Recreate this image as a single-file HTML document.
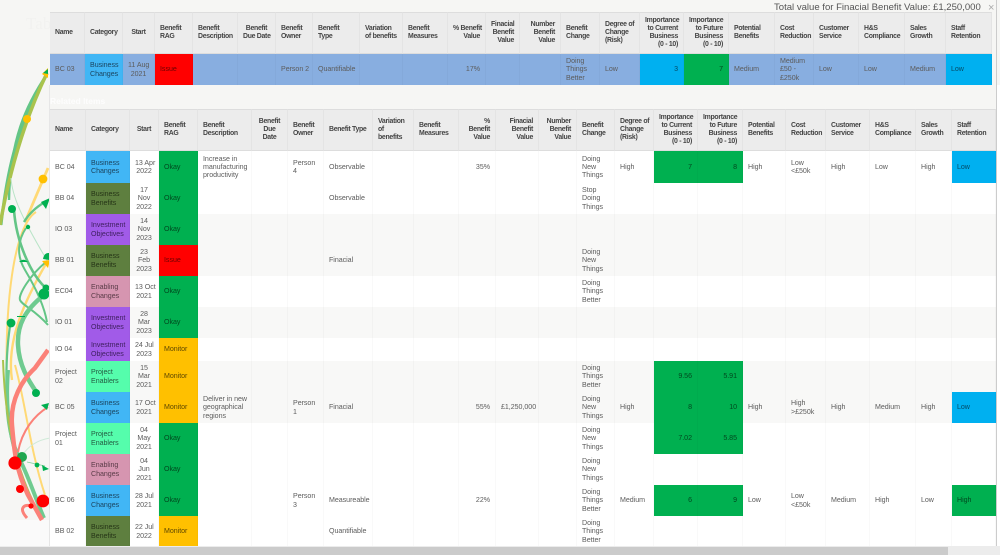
<!DOCTYPE html>
<html><head><meta charset="utf-8"><style>
html,body{margin:0;padding:0;width:1000px;height:555px;overflow:hidden;background:#f6f6f4}
#w{position:absolute;left:0;top:0;width:1000px;height:555px;overflow:hidden;filter:blur(.3px);font-family:"Liberation Sans",sans-serif}
table{position:absolute;left:50px;border-collapse:separate;border-spacing:0;table-layout:fixed;font-size:7.1px;line-height:8.1px;color:#5c5c5c;letter-spacing:-.04px}
td,th{box-sizing:border-box;padding:0 5px;overflow:hidden;white-space:nowrap;vertical-align:middle;text-align:left;border-right:1px solid rgba(0,0,0,.025)}
th{background:#ececec;color:#444;font-weight:bold;font-size:6.9px;letter-spacing:-.28px;border-top:1px solid #ddd;border-bottom:1px solid #ddd;border-right:1px solid #e4e4e4}
.r{text-align:right}.c{text-align:center}
.w td{background:#fff}.g td{background:#f8f8f7}.s td{background:#88aee0}
td.bc{background:#41b6f5!important;color:#1c4560}
td.bb{background:#5e7f3f!important;color:#263517}
td.io{background:#a15be8!important;color:#3f2060}
td.ec{background:#d695b0!important;color:#5a3c48}
td.pe{background:#55fdac!important;color:#245c42}
td.ok{background:#00b050!important;color:#00491f}
td.is{background:#f00!important;color:#6b0000}
td.mo{background:#ffc000!important;color:#5f4800}
td.cy{background:#00b0f0!important;color:#044a66}
.t{position:absolute;white-space:nowrap}
</style></head><body><div id="w">
<div style="position:absolute;left:0;top:520px;width:50px;height:27px;background:#fafafa"></div>
<div class="t" style="left:26px;top:14px;font:17px 'Liberation Serif',serif;color:#f2f2f0">Table of Portfolio Benefits</div>
<div class="t" style="left:50px;top:96px;font:bold 8.5px 'Liberation Sans',sans-serif;color:#fdfdfd">Related Items</div>
<div class="t" style="left:774px;top:1px;font-size:9.55px;line-height:13px;color:#555">Total value for Finacial Benefit Value: £1,250,000</div>
<div class="t" style="left:988px;top:2px;font-size:11px;line-height:12px;color:#aaa">×</div>

<table style="top:12px;width:942px">
<colgroup><col width="35"><col width="38"><col width="32"><col width="38"><col width="45"><col width="38"><col width="37"><col width="47"><col width="43"><col width="45"><col width="38"><col width="34"><col width="41"><col width="39"><col width="40"><col width="44"><col width="45"><col width="46"><col width="39"><col width="45"><col width="46"><col width="41"><col width="46"></colgroup>
<tr style="height:42px"><th>Name</th><th>Category</th><th class="c">Start</th><th>Benefit<br>RAG</th><th>Benefit<br>Description</th><th class="c">Benefit<br>Due Date</th><th>Benefit<br>Owner</th><th>Benefit<br>Type</th><th>Variation<br>of benefits</th><th>Benefit<br>Measures</th><th class="r">% Benefit<br>Value</th><th class="r">Finacial<br>Benefit<br>Value</th><th class="r">Number<br>Benefit<br>Value</th><th>Benefit<br>Change</th><th>Degree of<br>Change<br>(Risk)</th><th class="r">Importance<br>to Current<br>Business<br>(0 - 10)</th><th class="r">Importance<br>to Future<br>Business<br>(0 - 10)</th><th>Potential<br>Benefits</th><th>Cost<br>Reduction</th><th>Customer<br>Service</th><th>H&amp;S<br>Compliance</th><th>Sales<br>Growth</th><th>Staff<br>Retention</th></tr>
<tr class="s" style="height:31px"><td>BC 03</td><td class="bc">Business<br>Changes</td><td class="c">11 Aug<br>2021</td><td class="is">Issue</td><td></td><td></td><td>Person 2</td><td>Quantifiable</td><td></td><td></td><td class="r">17%</td><td></td><td></td><td>Doing<br>Things<br>Better</td><td>Low</td><td class="r cy">3</td><td class="r ok">7</td><td>Medium</td><td>Medium<br>£50 -<br>£250k</td><td>Low</td><td>Low</td><td>Medium</td><td class="cy">Low</td></tr>
</table>

<table style="top:109px;width:946px">
<colgroup><col width="36"><col width="44"><col width="29"><col width="39"><col width="54"><col width="36"><col width="36"><col width="49"><col width="41"><col width="45"><col width="37"><col width="43"><col width="38"><col width="38"><col width="39"><col width="44"><col width="45"><col width="43"><col width="40"><col width="44"><col width="46"><col width="36"><col width="44"></colgroup>
<tr style="height:42px"><th>Name</th><th>Category</th><th class="c">Start</th><th>Benefit<br>RAG</th><th>Benefit<br>Description</th><th class="c">Benefit<br>Due<br>Date</th><th>Benefit<br>Owner</th><th>Benefit Type</th><th>Variation<br>of<br>benefits</th><th>Benefit<br>Measures</th><th class="r">%<br>Benefit<br>Value</th><th class="r">Finacial<br>Benefit<br>Value</th><th class="r">Number<br>Benefit<br>Value</th><th>Benefit<br>Change</th><th>Degree of<br>Change<br>(Risk)</th><th class="r">Importance<br>to Current<br>Business<br>(0 - 10)</th><th class="r">Importance<br>to Future<br>Business<br>(0 - 10)</th><th>Potential<br>Benefits</th><th>Cost<br>Reduction</th><th>Customer<br>Service</th><th>H&amp;S<br>Compliance</th><th>Sales<br>Growth</th><th>Staff<br>Retention</th></tr>
<tr class="w" style="height:32px"><td>BC 04</td><td class="bc">Business<br>Changes</td><td class="c">13 Apr<br>2022</td><td class="ok">Okay</td><td>Increase in<br>manufacturing<br>productivity</td><td></td><td>Person<br>4</td><td>Observable</td><td></td><td></td><td class="r">35%</td><td></td><td></td><td>Doing<br>New<br>Things</td><td>High</td><td class="r ok">7</td><td class="r ok">8</td><td>High</td><td>Low<br>&lt;£50k</td><td>High</td><td>Low</td><td>High</td><td class="cy">Low</td></tr>
<tr class="w" style="height:31px"><td>BB 04</td><td class="bb">Business<br>Benefits</td><td class="c">17<br>Nov<br>2022</td><td class="ok">Okay</td><td></td><td></td><td></td><td>Observable</td><td></td><td></td><td></td><td></td><td></td><td>Stop<br>Doing<br>Things</td><td></td><td></td><td></td><td></td><td></td><td></td><td></td><td></td><td></td></tr>
<tr class="g" style="height:31px"><td>IO 03</td><td class="io">Investment<br>Objectives</td><td class="c">14<br>Nov<br>2023</td><td class="ok">Okay</td><td></td><td></td><td></td><td></td><td></td><td></td><td></td><td></td><td></td><td></td><td></td><td></td><td></td><td></td><td></td><td></td><td></td><td></td><td></td></tr>
<tr class="g" style="height:31px"><td>BB 01</td><td class="bb">Business<br>Benefits</td><td class="c">23<br>Feb<br>2023</td><td class="is">Issue</td><td></td><td></td><td></td><td>Finacial</td><td></td><td></td><td></td><td></td><td></td><td>Doing<br>New<br>Things</td><td></td><td></td><td></td><td></td><td></td><td></td><td></td><td></td><td></td></tr>
<tr class="w" style="height:31px"><td>EC04</td><td class="ec">Enabling<br>Changes</td><td class="c">13 Oct<br>2021</td><td class="ok">Okay</td><td></td><td></td><td></td><td></td><td></td><td></td><td></td><td></td><td></td><td>Doing<br>Things<br>Better</td><td></td><td></td><td></td><td></td><td></td><td></td><td></td><td></td><td></td></tr>
<tr class="g" style="height:31px"><td>IO 01</td><td class="io">Investment<br>Objectives</td><td class="c">28<br>Mar<br>2023</td><td class="ok">Okay</td><td></td><td></td><td></td><td></td><td></td><td></td><td></td><td></td><td></td><td></td><td></td><td></td><td></td><td></td><td></td><td></td><td></td><td></td><td></td></tr>
<tr class="w" style="height:23px"><td>IO 04</td><td class="io">Investment<br>Objectives</td><td class="c">24 Jul<br>2023</td><td class="mo">Monitor</td><td></td><td></td><td></td><td></td><td></td><td></td><td></td><td></td><td></td><td></td><td></td><td></td><td></td><td></td><td></td><td></td><td></td><td></td><td></td></tr>
<tr class="g" style="height:31px"><td>Project<br>02</td><td class="pe">Project<br>Enablers</td><td class="c">15<br>Mar<br>2021</td><td class="mo">Monitor</td><td></td><td></td><td></td><td></td><td></td><td></td><td></td><td></td><td></td><td>Doing<br>Things<br>Better</td><td></td><td class="r ok">9.56</td><td class="r ok">5.91</td><td></td><td></td><td></td><td></td><td></td><td></td></tr>
<tr class="g" style="height:31px"><td>BC 05</td><td class="bc">Business<br>Changes</td><td class="c">17 Oct<br>2021</td><td class="mo">Monitor</td><td>Deliver in new<br>geographical<br>regions</td><td></td><td>Person<br>1</td><td>Finacial</td><td></td><td></td><td class="r">55%</td><td class="r">£1,250,000</td><td></td><td>Doing<br>New<br>Things</td><td>High</td><td class="r ok">8</td><td class="r ok">10</td><td>High</td><td>High<br>&gt;£250k</td><td>High</td><td>Medium</td><td>High</td><td class="cy">Low</td></tr>
<tr class="w" style="height:31px"><td>Project<br>01</td><td class="pe">Project<br>Enablers</td><td class="c">04<br>May<br>2021</td><td class="ok">Okay</td><td></td><td></td><td></td><td></td><td></td><td></td><td></td><td></td><td></td><td>Doing<br>New<br>Things</td><td></td><td class="r ok">7.02</td><td class="r ok">5.85</td><td></td><td></td><td></td><td></td><td></td><td></td></tr>
<tr class="w" style="height:31px"><td>EC 01</td><td class="ec">Enabling<br>Changes</td><td class="c">04<br>Jun<br>2021</td><td class="ok">Okay</td><td></td><td></td><td></td><td></td><td></td><td></td><td></td><td></td><td></td><td>Doing<br>New<br>Things</td><td></td><td></td><td></td><td></td><td></td><td></td><td></td><td></td><td></td></tr>
<tr class="w" style="height:31px"><td>BC 06</td><td class="bc">Business<br>Changes</td><td class="c">28 Jul<br>2021</td><td class="ok">Okay</td><td></td><td></td><td>Person<br>3</td><td>Measureable</td><td></td><td></td><td class="r">22%</td><td></td><td></td><td>Doing<br>Things<br>Better</td><td>Medium</td><td class="r ok">6</td><td class="r ok">9</td><td>Low</td><td>Low<br>&lt;£50k</td><td>Medium</td><td>High</td><td>Low</td><td class="ok">High</td></tr>
<tr class="w" style="height:31px"><td>BB 02</td><td class="bb">Business<br>Benefits</td><td class="c">22 Jul<br>2022</td><td class="mo">Monitor</td><td></td><td></td><td></td><td>Quantifiable</td><td></td><td></td><td></td><td></td><td></td><td>Doing<br>Things<br>Better</td><td></td><td></td><td></td><td></td><td></td><td></td><td></td><td></td><td></td></tr>
</table>

<svg width="50" height="555" style="position:absolute;left:0;top:0" fill="none" stroke-linecap="butt">
<path d="M1 225C6 180 14 130 47 74" stroke="#63c586" stroke-width="3"/>
<path d="M9 200C10 140 26 105 47 74" stroke="#63c586" stroke-width="2.4"/>
<path d="M0 225C8 180 22 125 47 73" stroke="#a9c34d" stroke-width="3.5"/>
<path d="M25 222L48 168" stroke="#ffd975" stroke-width="2.8"/>
<path d="M11 178C12 195 20 215 48 262" stroke="#b9e4c7" stroke-width="1"/>
<path d="M24 222C30 212 38 206 45 202" stroke="#63c586" stroke-width="2.4"/>
<path d="M36 212C15 225 2 300 8 420" stroke="#ffd975" stroke-width="2"/>
<path d="M47 262C25 300 6 340 12 380" stroke="#ffd975" stroke-width="2.4"/>
<path d="M14 210C16 240 30 275 48 290" stroke="#63c586" stroke-width="2.6"/>
<path d="M26 228C18 240 16 255 25 270S44 305 47 322" stroke="#63c586" stroke-width="2"/>
<path d="M46 262C30 275 18 295 20 300S35 310 48 325" stroke="#63c586" stroke-width="2"/>
<path d="M44 295C25 310 17 325 18 345S28 380 37 393" stroke="#6fcb90" stroke-width="4.5"/>
<path d="M11 320C4 360 5 420 14 450" stroke="#63c586" stroke-width="2.2"/>
<path d="M8 370C5 410 10 440 20 460S36 500 44 518" stroke="#6fcb90" stroke-width="4"/>
<path d="M15 365C25 400 30 450 45 495" stroke="#ffd975" stroke-width="2"/>
<path d="M3 360C5 420 15 470 40 515" stroke="#a9c34d" stroke-width="2"/>
<path d="M48 350L35 368C22 380 10 400 12 425S16 470 28 495L42 520" stroke="#fb8178" stroke-width="4.5"/>
<path d="M48 407C35 415 22 430 18 452" stroke="#fb8178" stroke-width="2"/>
<path d="M50 438C38 440 28 446 22 456" stroke="#cfead8" stroke-width="1"/>
<path d="M27 518C18 508 24 504 32 506" stroke="#fb8178" stroke-width="3"/>
<path d="M27 462L45 466" stroke="#7fd09a" stroke-width=".8"/>
<g stroke="none">
<circle cx="27" cy="119" r="4" fill="#ffc000"/>
<circle cx="43" cy="179" r="4.4" fill="#ffc000"/>
<circle cx="12" cy="209" r="4" fill="#00b050"/>
<circle cx="28" cy="227" r="2.2" fill="#00b050"/>
<circle cx="11" cy="323" r="4.4" fill="#00b050"/>
<circle cx="44" cy="294" r="5.5" fill="#00b050"/>
<circle cx="46" cy="288" r="3.5" fill="#00b050"/>
<circle cx="36" cy="393" r="4" fill="#00b050"/>
<circle cx="37" cy="465" r="2.4" fill="#00b050"/>
<circle cx="22" cy="457" r="5" fill="#1fa64f"/>
<circle cx="15" cy="463" r="6.6" fill="#f00"/>
<circle cx="20" cy="489" r="4" fill="#f00"/>
<circle cx="43" cy="501" r="6.4" fill="#f00"/>
<circle cx="31" cy="506" r="2.6" fill="#f00"/>
<path d="M50 198L41 202L46 209Z" fill="#00b050"/>
<path d="M49 403L41 405L47 410Z" fill="#00b050"/>
<path d="M49 469L42 465L43 471Z" fill="#00b050"/>
<path d="M48 68L42 74L48 78Z" fill="#ffc000"/>
<path d="M43 73L48 69V74Z" fill="#00b050"/>
<path d="M50 260L42 261L48 268Z" fill="#ffc000"/>
<path d="M43 259C44 254 46 253 49 253V260Z" fill="#00b050"/>
<path d="M19 262C22 259 25 259 28 262Z" fill="#00b050"/>
<path d="M17 316H25V317H17Z" fill="#00b050"/>
</g>
</svg>
<div style="position:absolute;left:49px;top:85px;width:1px;height:462px;background:#e6e6e6"></div>
<div style="position:absolute;left:996px;top:0;width:1px;height:547px;background:#ccc"></div>
<div style="position:absolute;left:997px;top:85px;width:3px;height:462px;background:#fff"></div>
<div style="position:absolute;left:0;top:546px;width:1000px;height:9px;background:#ececec"></div>
<div style="position:absolute;left:0;top:547px;width:948px;height:8px;background:#cbcbcb"></div>
</div></body></html>
